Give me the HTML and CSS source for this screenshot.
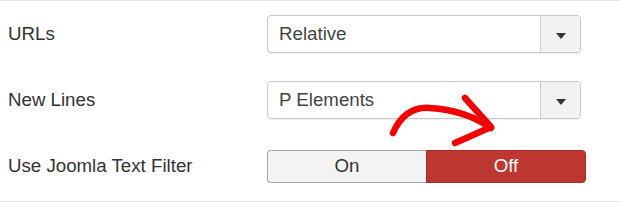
FILE: index.html
```html
<!DOCTYPE html>
<html lang="en">
<head>
    <meta charset="UTF-8">
    <title>Editor Options</title>
    <link rel="stylesheet" href="styles.css">
</head>
<body>

    <div class="options">
        <div class="row">
            <label class="row-label">URLs</label>
            <div class="select">
                <span class="select-value">Relative</span>
                <span class="select-button"><b class="caret"></b></span>
            </div>
        </div>

        <div class="row">
            <label class="row-label">New Lines</label>
            <div class="select">
                <span class="select-value">P Elements</span>
                <span class="select-button"><b class="caret"></b></span>
            </div>
        </div>

        <div class="row">
            <label class="row-label">Use Joomla Text Filter</label>
            <div class="toggle">
                <span class="toggle-btn">On</span>
                <span class="toggle-btn active">Off</span>
            </div>
        </div>

        <!-- hand drawn pointer -->
        <svg class="pointer" width="120" height="64" viewBox="385 88 120 64">
            <path d="M393,133 Q405,106 430,108 Q465,110 491,128" />
            <path d="M465,98 L491,127 L455,143" />
        </svg>
    </div>

</body>
</html>
```

FILE: styles.css
```css
body {
    margin: 0;
    font-family: "Liberation Sans", Arial, sans-serif;
    background: #fff;
}

.options {
    position: relative;
    width: 620px;
    border-top: 1px solid #e6e6e6;
    border-bottom: 1px solid #e6e6e6;
    padding-bottom: 2px;
}

.row {
    display: flex;
    align-items: center;
    height: 66px;
}

.row-label {
    flex-shrink: 0;
    width: 267px;
    padding-left: 8px;
    box-sizing: border-box;
    font-size: 18.7px;
    color: #333;
}

.select {
    display: flex;
    width: 314px;
    height: 38px;
    box-sizing: border-box;
    border: 1px solid #c8c8c8;
    border-radius: 4px;
    background: #fff;
    box-shadow: 0 1px 1px rgba(0, 0, 0, 0.06);
    overflow: hidden;
}

.select-value {
    flex: 1;
    display: flex;
    align-items: center;
    padding-left: 11px;
    font-size: 18.7px;
    color: #444;
}

.select-button {
    width: 39px;
    display: flex;
    align-items: center;
    justify-content: center;
    background: #f2f2f2;
    border-left: 1px solid #d0d0d0;
}

.caret {
    width: 0;
    height: 0;
    margin-top: 3px;
    border-top: 6px solid #333;
    border-left: 5.5px solid transparent;
    border-right: 5.5px solid transparent;
}

.toggle {
    display: flex;
    width: 319px;
    height: 33px;
}

.toggle-btn {
    flex: 1;
    display: flex;
    align-items: center;
    justify-content: center;
    font-size: 18.7px;
    color: #333;
    background: #f3f3f3;
    border: 1px solid #a6a6a6;
    border-right: none;
    border-radius: 4px 0 0 4px;
}

.toggle-btn.active {
    color: #fff;
    background: #bd362f;
    border: 1px solid #a52c27;
    border-radius: 0 4px 4px 0;
}

.pointer {
    position: absolute;
    left: 385px;
    top: 87px;
    fill: none;
    stroke: #f40000;
    stroke-width: 6.5;
    stroke-linecap: round;
    stroke-linejoin: round;
}
```
